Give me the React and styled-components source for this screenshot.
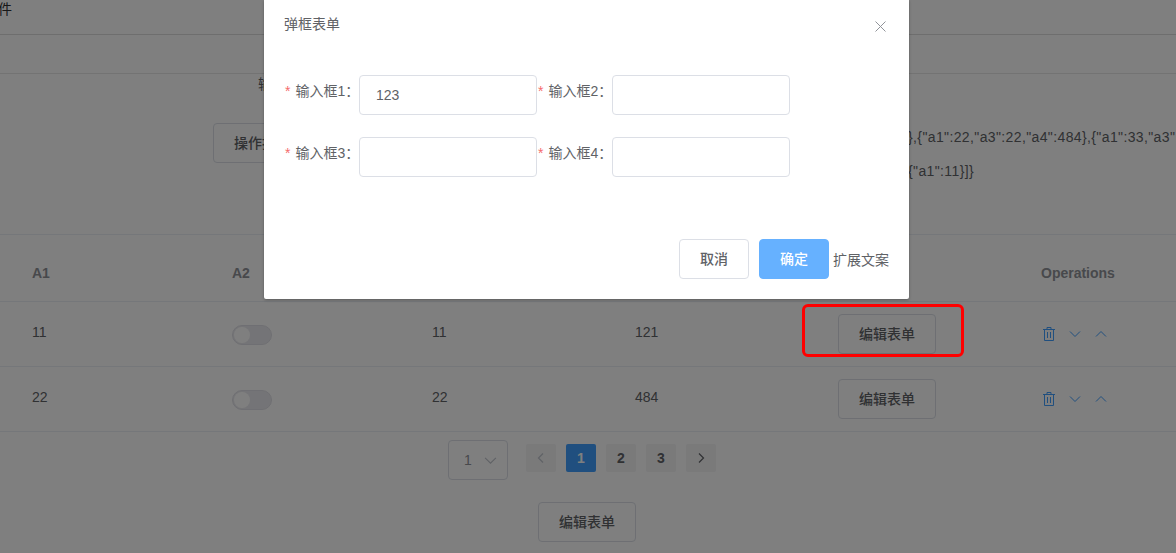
import React from "react";
import styled, { createGlobalStyle } from "styled-components";

const Global = createGlobalStyle`
  html, body { margin: 0; padding: 0; background: #fff; }
  body { font-family: "Liberation Sans", "Noto Sans CJK SC", sans-serif; font-size: 14px; color: #606266; }
  * { box-sizing: border-box; }
`;

const Page = styled.div`
  position: relative;
  width: 1176px;
  height: 553px;
  overflow: hidden;
  background: #fff;
`;

const TopBar = styled.div`
  height: 35px;
  border-bottom: 1px solid #dcdcdc;
  color: #303133;
  font-size: 14px;
  line-height: 18px;
  margin: 0;
  text-indent: -2px;
`;

const SubBar = styled.div`
  height: 39px;
  border-bottom: 1px solid #e6e6e6;
`;

const FormArea = styled.div`
  height: 161px;
  border-bottom: 1px solid #ebeef5;
  display: flex;
`;

const LeftCol = styled.div`
  width: 908px;
  flex: none;
  padding-left: 213px;
  display: flex;
  flex-direction: column;
  align-items: flex-start;
`;

const HiddenLabel = styled.div`
  height: 20px;
  line-height: 20px;
  margin: 0 0 29px 45px;
  color: #606266;
`;

const JsonCol = styled.div`
  flex: 1;
  min-width: 0;
  padding-top: 46px;
  overflow: hidden;
`;

const JsonLine = styled.div`
  height: 34px;
  line-height: 34px;
  white-space: nowrap;
  letter-spacing: 0.38px;
  color: #606266;
`;

const Button = styled.button`
  width: ${(p) => p.$w || 98}px;
  height: 40px;
  padding: 0 0 2px;
  border: 1px solid ${(p) => (p.$primary ? "#66b1ff" : "#dcdfe6")};
  border-radius: 4px;
  background: ${(p) => (p.$primary ? "#66b1ff" : "#fff")};
  color: ${(p) => (p.$primary ? "#fff" : "#606266")};
  font-family: inherit;
  font-size: 14px;
  font-weight: 500;
  flex: none;
`;

const Row = styled.div`
  height: ${(p) => (p.$head ? 67 : 65)}px;
  padding-left: 32px;
  border-bottom: 1px solid #ebeef5;
  display: grid;
  grid-template-columns: 200px 200px 203px 203px 203px 1fr;
  align-items: center;
`;

const HeadCell = styled.div`
  color: #909399;
  font-weight: 700;
  padding-top: 10px;
`;

const Cell = styled.div`
  padding-bottom: 4px;
  color: #606266;
`;

const SwitchTrack = styled.span`
  display: block;
  position: relative;
  width: 40px;
  height: 20px;
  margin-top: 2px;
  border-radius: 10px;
  background: #e9e9ee;
  border: 1px solid #dfdfe6;
`;

const SwitchKnob = styled.span`
  position: absolute;
  left: 1px;
  top: 1px;
  width: 16px;
  height: 16px;
  border-radius: 50%;
  background: #fff;
`;

const Ops = styled.div`
  display: flex;
  align-items: center;
  gap: 14px;
  padding-left: 2px;
  color: #409eff;
`;

const Pager = styled.div`
  height: 70px;
  padding: 8px 12px 0 0;
  display: flex;
  justify-content: center;
  align-items: flex-start;
`;

const PageSelect = styled.div`
  width: 60px;
  height: 40px;
  margin-right: 18px;
  border: 1px solid #dcdfe6;
  border-radius: 4px;
  padding: 0 10px 0 15px;
  display: flex;
  align-items: center;
  justify-content: space-between;
  color: #909399;
`;

const SelectArrow = styled.span`
  display: flex;
  color: #c0c4cc;
`;

const PageList = styled.div`
  display: flex;
  gap: 10px;
  padding-top: 4px;
`;

const PageBtn = styled.div`
  width: 30px;
  height: 28px;
  border-radius: 2px;
  background: ${(p) => (p.$active ? "#409eff" : "#f4f4f5")};
  color: ${(p) => (p.$active ? "#fff" : p.$disabled ? "#c0c4cc" : "#606266")};
  font-size: 14px;
  font-weight: 700;
  display: flex;
  align-items: center;
  justify-content: center;
`;

const BottomBar = styled.div`
  display: flex;
  justify-content: center;
  padding-right: 2px;
`;

const Mask = styled.div`
  position: absolute;
  inset: 0;
  background: rgba(0, 0, 0, 0.5);
`;

const Highlight = styled.div`
  position: absolute;
  left: 802px;
  top: 304px;
  width: 162px;
  height: 53px;
  border: 3px solid #f00;
  border-radius: 6px;
`;

const Dialog = styled.div`
  position: absolute;
  left: 264px;
  top: 0;
  width: 645px;
  height: 299px;
  background: #fff;
  border-radius: 0 0 2px 2px;
  box-shadow: 0 1px 3px rgba(0, 0, 0, 0.3);
  display: flex;
  flex-direction: column;
`;

const DialogHead = styled.div`
  height: 75px;
  padding: 15px 21px 0 20px;
  display: flex;
  justify-content: space-between;
  align-items: flex-start;
`;

const DialogTitle = styled.div`
  font-size: 14px;
  line-height: 18px;
  color: #606266;
`;

const CloseBtn = styled.svg`
  width: 11px;
  height: 11px;
  margin: 6px 2px 0 0;
  color: #909399;
`;

const FormGrid = styled.div`
  padding-left: 20px;
  display: grid;
  grid-template-columns: 253px 253px;
  row-gap: 22px;
`;

const FormItem = styled.div`
  display: flex;
  align-items: flex-start;
`;

const FieldLabel = styled.label`
  width: 75px;
  flex: none;
  padding-left: 1px;
  line-height: 32px;
  white-space: nowrap;
  color: #606266;
`;

const Star = styled.span`
  color: #f56c6c;
  margin-right: 5px;
`;

const Field = styled.input`
  width: 178px;
  height: 40px;
  flex: none;
  padding: 0 16px;
  border: 1px solid #dcdfe6;
  border-radius: 4px;
  outline: none;
  background: #fff;
  font-family: inherit;
  font-size: 14px;
  color: #606266;
`;

const DialogFoot = styled.div`
  margin-top: 62px;
  padding-right: 20px;
  display: flex;
  justify-content: flex-end;
  align-items: center;
`;

const FootGap = styled.span`
  width: 10px;
`;

const Extra = styled.span`
  margin-left: 4px;
  color: #606266;
`;

const Chevron = ({ up, size = 12 }) => (
  <svg width={size} height={size} viewBox="0 0 12 12" fill="none" stroke="currentColor" strokeWidth="1">
    <path d={up ? "M1 8.5 6 3.5 11 8.5" : "M1 3.5 6 8.5 11 3.5"} />
  </svg>
);

const Trash = () => (
  <svg width="12" height="14" viewBox="0 0 12 14" fill="none" stroke="currentColor" strokeWidth="1">
    <path d="M0 2.5H12M4 2.5V.5H8V2.5M1.5 2.5V13.5H10.5V2.5M4.5 5V11M7.5 5V11" />
  </svg>
);

const Side = ({ right }) => (
  <svg width="12" height="12" viewBox="0 0 12 12" fill="none" stroke="currentColor" strokeWidth="1.2">
    <path d={right ? "M4 1.5 8.5 6 4 10.5" : "M8 1.5 3.5 6 8 10.5"} />
  </svg>
);

const rows = [
  { a1: "11", a3: "11", a4: "121" },
  { a1: "22", a3: "22", a4: "484" },
];

const fields = [
  { label: "输入框1：", value: "123" },
  { label: "输入框2：", value: "" },
  { label: "输入框3：", value: "" },
  { label: "输入框4：", value: "" },
];

export default function App() {
  return (
    <Page>
      <Global />
      <TopBar>件</TopBar>
      <SubBar />
      <FormArea>
        <LeftCol>
          <HiddenLabel>输入框</HiddenLabel>
          <Button>操作按钮</Button>
        </LeftCol>
        <JsonCol>
          <JsonLine>{'},{"a1":22,"a3":22,"a4":484},{"a1":33,"a3":33,"a4":1089}'}</JsonLine>
          <JsonLine>{'{"a1":11}]}'}</JsonLine>
        </JsonCol>
      </FormArea>
      <Row $head>
        <HeadCell>A1</HeadCell>
        <HeadCell>A2</HeadCell>
        <HeadCell>A3</HeadCell>
        <HeadCell>A4</HeadCell>
        <HeadCell>A5</HeadCell>
        <HeadCell>Operations</HeadCell>
      </Row>
      {rows.map((r) => (
        <Row key={r.a1}>
          <Cell>{r.a1}</Cell>
          <div>
            <SwitchTrack>
              <SwitchKnob />
            </SwitchTrack>
          </div>
          <Cell>{r.a3}</Cell>
          <Cell>{r.a4}</Cell>
          <div>
            <Button>编辑表单</Button>
          </div>
          <Ops>
            <Trash />
            <Chevron />
            <Chevron up />
          </Ops>
        </Row>
      ))}
      <Pager>
        <PageSelect>
          <span>1</span>
          <SelectArrow>
            <Chevron size={13} />
          </SelectArrow>
        </PageSelect>
        <PageList>
          <PageBtn $disabled>
            <Side />
          </PageBtn>
          <PageBtn $active>1</PageBtn>
          <PageBtn>2</PageBtn>
          <PageBtn>3</PageBtn>
          <PageBtn>
            <Side right />
          </PageBtn>
        </PageList>
      </Pager>
      <BottomBar>
        <Button>编辑表单</Button>
      </BottomBar>
      <Mask />
      <Highlight />
      <Dialog>
        <DialogHead>
          <DialogTitle>弹框表单</DialogTitle>
          <CloseBtn viewBox="0 0 11 11" fill="none" stroke="currentColor" strokeWidth="1">
            <path d="M.5.5 10.5 10.5M10.5.5.5 10.5" />
          </CloseBtn>
        </DialogHead>
        <FormGrid>
          {fields.map((f) => (
            <FormItem key={f.label}>
              <FieldLabel>
                <Star>*</Star>
                {f.label}
              </FieldLabel>
              <Field defaultValue={f.value} />
            </FormItem>
          ))}
        </FormGrid>
        <DialogFoot>
          <Button $w={70}>取消</Button>
          <FootGap />
          <Button $w={70} $primary>确定</Button>
          <Extra>扩展文案</Extra>
        </DialogFoot>
      </Dialog>
    </Page>
  );
}
